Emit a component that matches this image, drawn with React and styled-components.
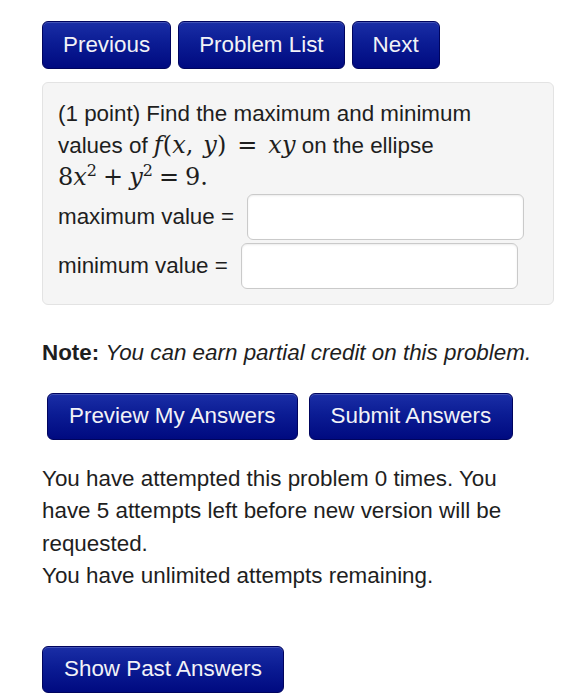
import React from "react";
import styled, { createGlobalStyle } from "styled-components";

const Global = createGlobalStyle`
  html, body { margin: 0; padding: 0; background: #fff; }
  body {
    font-family: "Liberation Sans", Arial, Helvetica, sans-serif;
    font-size: 22.4px;
    line-height: 32.5px;
    color: #1e1e1e;
  }
`;

const Page = styled.div`
  width: 512px;
  margin-left: 42px;
  padding-top: 21px;
  padding-bottom: 20px;
`;

const NavBar = styled.div`
  display: flex;
  gap: 7px;
  margin-bottom: 13px;
`;

const Button = styled.button`
  box-sizing: border-box;
  height: ${(p) => (p.$tall ? 48 : 47)}px;
  padding: 0 ${(p) => (p.$tall ? 20 : 21)}px;
  border: 1px solid #00045e;
  border-radius: 6px;
  background: linear-gradient(to bottom, #1a2ea6 0%, #0b1c94 45%, #000a80 100%);
  box-shadow: inset 0 1px 0 rgba(255, 255, 255, 0.18);
  color: #f2f2f7;
  font-family: "Liberation Sans", Arial, Helvetica, sans-serif;
  font-size: 22.4px;
  line-height: 1;
  white-space: nowrap;
  cursor: pointer;
`;

const Panel = styled.div`
  box-sizing: border-box;
  width: 512px;
  padding: 15px;
  background: #f5f5f5;
  border: 1px solid #e3e3e3;
  border-radius: 6px;
`;

const Question = styled.p`
  margin: 0;
  line-height: 32px;
`;

const MathSpan = styled.span`
  font-family: "DejaVu Serif", "Liberation Serif", serif;
  font-size: 24px;
  line-height: 1;
  white-space: nowrap;
`;

const V = styled.i`
  font-style: italic;
`;

const Op = styled.span`
  margin: 0 ${(p) => p.$space}px;
`;

const Sup = styled.sup`
  font-size: 16px;
  vertical-align: 9px;
  line-height: 0;
`;

const AnswerRow = styled.div`
  display: flex;
  align-items: center;
  margin-top: ${(p) => p.$top}px;
`;

const Label = styled.span`
  white-space: nowrap;
`;

const Input = styled.input`
  box-sizing: border-box;
  width: 277px;
  height: 46px;
  margin-left: 13px;
  border: 1px solid #cacaca;
  border-radius: 6px;
  background: #fff;
  box-shadow: inset 0 1px 2px rgba(0, 0, 0, 0.08);
  font-size: 20px;
  padding: 0 8px;
`;

const Note = styled.p`
  margin: 32px 0 0;
`;

const ActionRow = styled.div`
  display: flex;
  gap: 11px;
  margin: 23px 0 0 5px;
`;

const Attempts = styled.p`
  max-width: 495px;
  margin: 23px 0 0;
`;

const Footer = styled.div`
  margin-top: 53px;
`;

export default function App() {
  return (
    <>
      <Global />
      <Page>
        <NavBar>
          <Button $tall>Previous</Button>
          <Button $tall>Problem List</Button>
          <Button $tall>Next</Button>
        </NavBar>

        <Panel>
          <Question>
            (1 point) Find the maximum and minimum values of{" "}
            <MathSpan>
              <V>f</V>(<V>x</V>,<Op $space={5}></Op><V>y</V>)<Op $space={11}>=</Op>
              <V>xy</V>
            </MathSpan>{" "}
            on the ellipse{" "}
            <MathSpan>
              8<V>x</V>
              <Sup>2</Sup>
              <Op $space={6}>+</Op>
              <V>y</V>
              <Sup>2</Sup>
              <Op $space={6}>=</Op>9.
            </MathSpan>
          </Question>
          <AnswerRow $top={0}>
            <Label>maximum value =</Label>
            <Input aria-label="maximum value" />
          </AnswerRow>
          <AnswerRow $top={3}>
            <Label>minimum value =</Label>
            <Input aria-label="minimum value" />
          </AnswerRow>
        </Panel>

        <Note>
          <b>Note:</b> <i>You can earn partial credit on this problem.</i>
        </Note>

        <ActionRow>
          <Button>Preview My Answers</Button>
          <Button>Submit Answers</Button>
        </ActionRow>

        <Attempts>
          You have attempted this problem 0 times. You have 5 attempts left before new
          version will be requested.
          <br />
          You have unlimited attempts remaining.
        </Attempts>

        <Footer>
          <Button>Show Past Answers</Button>
        </Footer>
      </Page>
    </>
  );
}
